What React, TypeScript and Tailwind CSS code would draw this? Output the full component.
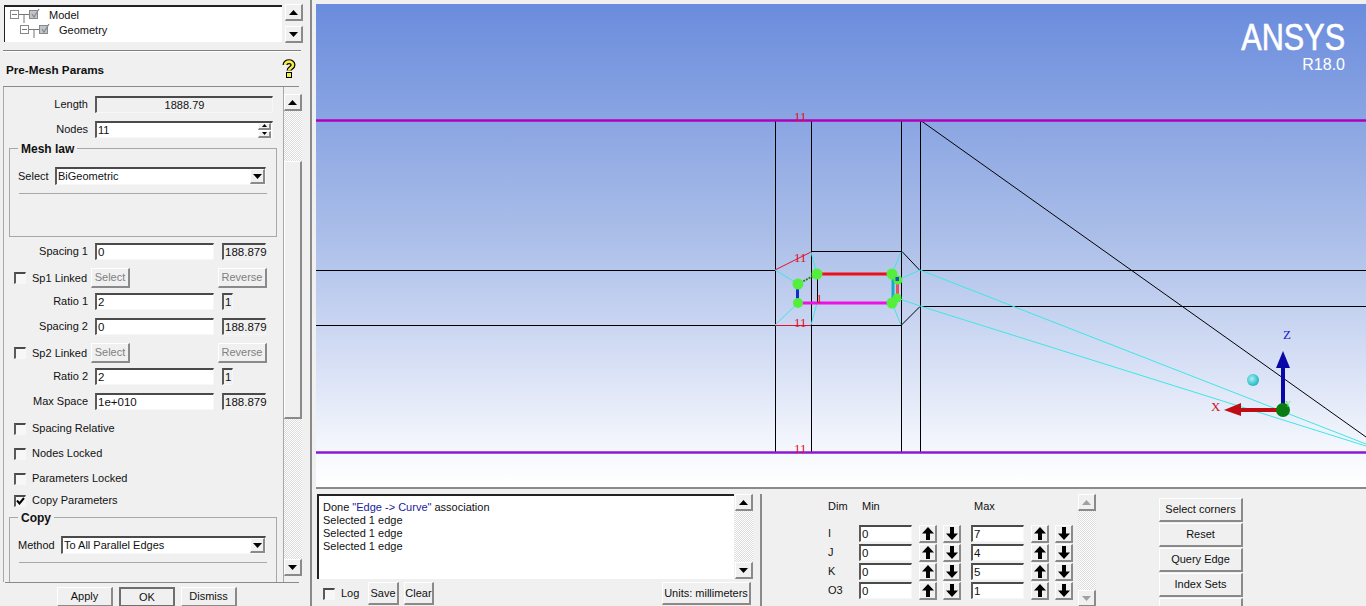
import type { ReactNode } from "react";

const font = { fontFamily: '"Liberation Sans", Arial, sans-serif' };

const raised = "border-t border-l border-t-white border-l-white border-r-2 border-b-2 border-r-[#8a8a8a] border-b-[#8a8a8a] bg-[#f0f0f0]";
const sunken = "border-t-2 border-l-2 border-t-[#4a4a4a] border-l-[#5a5a5a] border-r border-b border-r-[#f7f7f7] border-b-[#f7f7f7]";
const track = "bg-[repeating-conic-gradient(#ffffff_0_25%,#dcdcdc_0_50%)] bg-[length:2px_2px]";

function Arrow({ up, muted }: { up?: boolean; muted?: boolean }) {
  return (
    <svg width="9" height="5" viewBox="0 0 9 5">
      <path d={up ? "M4.5 0 L9 5 L0 5 Z" : "M0 0 L9 0 L4.5 5 Z"} fill={muted ? "#a0a0a0" : "#000"} />
    </svg>
  );
}

function ScrollBtn({ up, muted, h = "h-[17px]" }: { up?: boolean; muted?: boolean; h?: string }) {
  return (
    <div className={`${raised} ${h} w-[18px] shrink-0 flex items-center justify-center`}>
      <Arrow up={up} muted={muted} />
    </div>
  );
}

function Field({ value, w, blank }: { value: string; w: string; blank?: boolean }) {
  return (
    <div className={`${sunken} ${w} h-[17px] shrink-0 pl-px text-[11.5px] leading-[14px] ${blank ? "bg-white" : "bg-[#f0f0f0]"}`}>
      {value}
    </div>
  );
}

function LabelRow({ label, mt, children }: { label: string; mt: string; children: ReactNode }) {
  return (
    <div className={`${mt} flex h-[17px] items-center`}>
      <div className="w-[84px] shrink-0 text-right">{label}</div>
      <div className="ml-[7px] flex">{children}</div>
    </div>
  );
}

function SpacingRow({ label, mt, value, calc }: { label: string; mt: string; value: string; calc: string }) {
  return (
    <LabelRow label={label} mt={mt}>
      <Field value={value} w="w-[119px]" blank />
      <div className="ml-[8px]">
        <Field value={calc} w={calc === "1" ? "w-[11px]" : "w-[44px]"} />
      </div>
    </LabelRow>
  );
}

function Check({ checked }: { checked?: boolean }) {
  return (
    <div className={`${sunken} h-[12px] w-[12px] shrink-0 bg-[#f7f7f7] flex items-center justify-center`}>
      {checked && (
        <svg width="9" height="8" viewBox="0 0 9 8">
          <path d="M1 3.5 L3.5 6.5 L8 1" fill="none" stroke="#000" strokeWidth="2" />
        </svg>
      )}
    </div>
  );
}

function CheckRow({ label, mt, checked }: { label: string; mt: string; checked?: boolean }) {
  return (
    <div className={`${mt} ml-[10px] flex h-[13px] items-center gap-[6px]`}>
      <Check checked={checked} />
      <span>{label}</span>
    </div>
  );
}

function LinkedRow({ label, mt }: { label: string; mt: string }) {
  return (
    <div className={`${mt} flex h-[20px] items-center`}>
      <div className="ml-[10px]">
        <Check />
      </div>
      <span className="ml-[6px] w-[59px] shrink-0">{label}</span>
      <div className={`${raised} flex h-[20px] w-[39px] items-center justify-center text-[#808080]`}>Select</div>
      <div className={`${raised} ml-[88px] flex h-[20px] w-[49px] items-center justify-center text-[#808080]`}>Reverse</div>
    </div>
  );
}

function DropDown({ value, w }: { value: string; w: string }) {
  return (
    <div className={`${sunken} ${w} flex h-[18px] items-center justify-between bg-white pl-px`}>
      <span>{value}</span>
      <div className={`${raised} flex h-[15px] w-[15px] items-center justify-center`}>
        <Arrow />
      </div>
    </div>
  );
}

function GroupBox({ title, mt, h, children }: { title: string; mt: string; h: string; children: ReactNode }) {
  return (
    <div className={`${mt} ${h} relative ml-[5px] w-[268px] border border-[#a8a8a8] pt-[18px]`}>
      <div className="absolute -top-[9px] left-[8px] bg-[#f0f0f0] px-[3px] text-[12px] font-bold">{title}</div>
      {children}
    </div>
  );
}

function HelpIcon() {
  return (
    <svg width="14" height="19" viewBox="0 0 14 19" className="-mt-[3px]">
      <path d="M3 6 C3 1.5 11 1.5 11 6 C11 9 7 9 7 11.5" fill="none" stroke="#000" strokeWidth="5" />
      <path d="M3 6 C3 1.5 11 1.5 11 6 C11 9 7 9 7 11.5" fill="none" stroke="#f6ee3c" strokeWidth="2.6" />
      <rect x="4.5" y="13.5" width="5" height="5" fill="#f6ee3c" stroke="#000" />
    </svg>
  );
}

function TreeNode({ label, indent }: { label: string; indent: string }) {
  return (
    <div className={`${indent} flex h-[15px] items-center`}>
      <svg width="30" height="15" viewBox="0 0 30 15" className="shrink-0">
        <rect x="0.5" y="2.5" width="8" height="8" fill="#fff" stroke="#888" />
        <path d="M2 6.5 H7" stroke="#777" />
        <path d="M9 6.5 H19 M14 6.5 V15" stroke="#777" fill="none" />
        <rect x="19.5" y="2.5" width="8" height="8" fill="#bfc5cc" stroke="#888" />
        <path d="M22 6 L24 9 L29 1" fill="none" stroke="#8b8b8b" strokeWidth="1.3" />
      </svg>
      <span className="ml-[9px]">{label}</span>
    </div>
  );
}

function LeftPanel() {
  return (
    <div className="flex w-[312px] shrink-0 flex-col border-r-2 border-r-[#8a8a8a] pt-[4px]">
      <div className="flex h-[39px] shrink-0">
        <div className="ml-[4px] mt-px h-[37px] w-[278px] overflow-hidden border-t-2 border-l border-t-[#222] border-l-[#222] bg-white pl-[5px]">
          <TreeNode label="Model" indent="mt-px" />
          <TreeNode label="Geometry" indent="ml-[10px]" />
        </div>
        <div className="ml-[3px] flex w-[18px] flex-col justify-between">
          <ScrollBtn up />
          <ScrollBtn />
        </div>
      </div>
      <div className="ml-[3px] mt-[7px] h-[2px] w-[298px] shrink-0 border-t border-t-[#808080] border-b border-b-white" />
      <div className="flex h-[34px] shrink-0 items-center justify-between pl-[6px] pr-[14px] pt-[2px]">
        <span className="text-[11.7px] font-bold">Pre-Mesh Params</span>
        <HelpIcon />
      </div>
      <div className="ml-[3px] h-px w-[296px] shrink-0 bg-[#8a8a8a]" />
      <div className="flex h-[495px] shrink-0">
        <div className="ml-[3px] h-full w-[281px] overflow-hidden border-x border-x-[#a8a8a8]">
          <LabelRow label="Length" mt="mt-[9px]">
            <div className={`${sunken} flex h-[17px] w-[178px] items-center justify-center bg-[#f0f0f0]`}>1888.79</div>
          </LabelRow>
          <LabelRow label="Nodes" mt="mt-[8px]">
            <div className={`${sunken} flex h-[17px] w-[178px] items-center justify-between bg-white pl-px`}>
              <span>11</span>
              <div className="mr-px flex flex-col gap-px">
                <div className={`${raised} flex h-[7px] w-[13px] items-center justify-center`}>
                  <svg width="5" height="3" viewBox="0 0 5 3"><path d="M2.5 0 L5 3 L0 3 Z" /></svg>
                </div>
                <div className={`${raised} flex h-[7px] w-[13px] items-center justify-center`}>
                  <svg width="5" height="3" viewBox="0 0 5 3"><path d="M0 0 L5 0 L2.5 3 Z" /></svg>
                </div>
              </div>
            </div>
          </LabelRow>
          <GroupBox title="Mesh law" mt="mt-[10px]" h="h-[89px]">
            <div className="ml-[8px] flex items-center gap-[6px]">
              <span className="w-[31px]">Select</span>
              <DropDown value="BiGeometric" w="w-[211px]" />
            </div>
            <div className="ml-[9px] mt-[8px] h-px w-[248px] bg-[#a8a8a8]" />
          </GroupBox>
          <SpacingRow label="Spacing 1" mt="mt-[6px]" value="0" calc="188.879" />
          <LinkedRow label="Sp1 Linked" mt="mt-[8px]" />
          <SpacingRow label="Ratio 1" mt="mt-[5px]" value="2" calc="1" />
          <SpacingRow label="Spacing 2" mt="mt-[8px]" value="0" calc="188.879" />
          <LinkedRow label="Sp2 Linked" mt="mt-[8px]" />
          <SpacingRow label="Ratio 2" mt="mt-[5px]" value="2" calc="1" />
          <SpacingRow label="Max Space" mt="mt-[8px]" value="1e+010" calc="188.879" />
          <CheckRow label="Spacing Relative" mt="mt-[12px]" />
          <CheckRow label="Nodes Locked" mt="mt-[12px]" />
          <CheckRow label="Parameters Locked" mt="mt-[12px]" />
          <CheckRow label="Copy Parameters" mt="mt-[9px]" checked />
          <GroupBox title="Copy" mt="mt-[10px]" h="h-[70px]">
            <div className="ml-[8px] flex items-center gap-[6px]">
              <span className="w-[37px]">Method</span>
              <DropDown value="To All Parallel Edges" w="w-[205px]" />
            </div>
            <div className="ml-[9px] mt-[8px] h-px w-[248px] bg-[#a8a8a8]" />
          </GroupBox>
        </div>
        <div className="flex w-[19px] flex-col pt-[7px] pb-[6px]">
          <ScrollBtn up />
          <div className={`h-[50px] w-[18px] ${track}`} />
          <div className={`${raised} h-[258px] w-[18px]`} />
          <div className={`flex-1 w-[18px] ${track}`} />
          <ScrollBtn />
        </div>
      </div>
      <div className="ml-[5px] h-px w-[294px] shrink-0 bg-[#8a8a8a]" />
      <div className="ml-[57px] mt-[4px] flex shrink-0 gap-[6px]">
        <div className={`${raised} flex h-[20px] w-[56px] items-center justify-center`}>Apply</div>
        <div className="flex h-[20px] w-[56px] items-center justify-center border-2 border-[#6e6e6e]">OK</div>
        <div className={`${raised} flex h-[20px] w-[56px] items-center justify-center`}>Dismiss</div>
      </div>
    </div>
  );
}

function Viewport() {
  return (
    <div className="relative h-[483px] w-full shrink-0 overflow-hidden bg-[linear-gradient(to_bottom,#6a8cdd_0%,#a9bde8_47%,#d6dff5_74%,#f6f8fd_93%,#ffffff_100%)]">
      <svg className="absolute inset-0" width="1050" height="483" viewBox="316 4 1050 483">
        <defs>
          <radialGradient id="sphere" cx="40%" cy="40%" r="60%">
            <stop offset="0%" stopColor="#a8f0f0" />
            <stop offset="100%" stopColor="#20b8c4" />
          </radialGradient>
        </defs>
        <g stroke="#000" strokeWidth="1" fill="none">
          <path d="M775.5 120 V452 M811.5 120 V452 M901.5 120 V452 M920.5 120 V452" />
          <path d="M316 270.5 H775 M316 325.5 H775 M775 325.5 H901 L920 306.5 H1366" />
          <path d="M811 251.5 H902 L920 270.5 H1366" />
          <path d="M920 120 L1366 437" />
          <path d="M817.5 274 V303" />
        </g>
        <g stroke="#e01030" strokeWidth="1" fill="none">
          <path d="M775 270 L811 252 M775 325.5 H811" />
        </g>
        <g stroke="#3fe6e6" strokeWidth="1" fill="none">
          <path d="M920 270 L1366 444 M920 306 L1366 446" />
          <path d="M798 284 L775 270 M798 303 L775 325 M817 274 L811 252 M817 303 L811 325" />
          <path d="M892 274 L901 252 M892 303 L901 325 M898 280 L920 270 M897 298 L920 306" />
        </g>
        <path d="M316 120.5 H1366" stroke="#b000b8" strokeWidth="2.5" />
        <path d="M316 452.5 H1366" stroke="#8a18d4" strokeWidth="2.5" />
        <path d="M817 274 H892" stroke="#ee1018" strokeWidth="3" />
        <path d="M798 303 H892" stroke="#f010e0" strokeWidth="3" />
        <path d="M797.5 284 V303" stroke="#1030c8" strokeWidth="3" />
        <path d="M798 284 L817 274" stroke="#228822" strokeWidth="2" strokeDasharray="2 1" />
        <path d="M893 276 V302" stroke="#10b0c0" strokeWidth="3" />
        <path d="M897.5 282 V298" stroke="#e85060" strokeWidth="3" />
        <g fill="#54ee3c">
          <circle cx="817" cy="274" r="5.5" />
          <circle cx="798" cy="284" r="5.5" />
          <circle cx="798" cy="303" r="5" />
          <circle cx="892" cy="274" r="5.5" />
          <circle cx="898" cy="280" r="4.5" />
          <circle cx="897" cy="298" r="4.5" />
          <circle cx="892" cy="303" r="5.5" />
        </g>
        <path d="M895.5 277 H899 V281 H895.5 Z" fill="#2050c0" />
        <g fill="#e01020" fontFamily='"Liberation Serif", serif' fontSize="13">
          <text x="794" y="121">11</text>
          <text x="794" y="262">11</text>
          <text x="794" y="327">11</text>
          <text x="794" y="453">11</text>
          <text x="816" y="303">1</text>
        </g>
        <circle cx="1253" cy="380" r="6" fill="url(#sphere)" />
        <path d="M1283 410 V366" stroke="#0808a8" strokeWidth="4" />
        <path d="M1283 351 L1276 368 H1290 Z" fill="#0808a8" />
        <path d="M1283 410 H1240" stroke="#c00c14" strokeWidth="4" />
        <path d="M1224 410 L1241 403 V416 Z" fill="#c00c14" />
        <circle cx="1283" cy="410" r="7" fill="#0a7c14" />
        <text x="1283" y="339" fill="#1818c8" fontFamily='"Liberation Serif", serif' fontSize="13">Z</text>
        <text x="1211" y="411" fill="#d01020" fontFamily='"Liberation Serif", serif' fontSize="13">X</text>
        <text x="1285" y="407" fill="#50e040" fontFamily='"Liberation Serif", serif' fontSize="8">Y</text>
      </svg>
      <div className="absolute right-[21px] top-[16px] flex flex-col items-end text-white">
        <div className="origin-right scale-x-[0.85] text-[36px] leading-[36px] [-webkit-text-stroke:0.6px_white]">ANSYS</div>
        <div className="text-[16px] leading-[18px]">R18.0</div>
      </div>
    </div>
  );
}

function MessagePane() {
  return (
    <div className="flex w-[436px] shrink-0 flex-col">
      <div className="flex h-[85px]">
        <div className="h-full w-[417px] border-t-2 border-l-2 border-t-[#222] border-l-[#222] bg-white pl-[4px] pt-[5px] leading-[13px]">
          <div>
            Done <span className="text-[#1a1a9c]">"Edge -&gt; Curve"</span> association
          </div>
          <div>Selected 1 edge</div>
          <div>Selected 1 edge</div>
          <div>Selected 1 edge</div>
        </div>
        <div className={`ml-[1px] flex w-[18px] flex-col justify-between ${track}`}>
          <ScrollBtn up />
          <ScrollBtn />
        </div>
      </div>
      <div className="mt-[3px] flex items-center">
        <div className="ml-[6px]">
          <Check />
        </div>
        <span className="ml-[6px] w-[27px]">Log</span>
        <div className={`${raised} flex h-[23px] w-[31px] items-center justify-center`}>Save</div>
        <div className={`${raised} ml-[5px] flex h-[23px] w-[30px] items-center justify-center`}>Clear</div>
        <div className={`${raised} ml-[228px] flex h-[23px] w-[89px] items-center justify-center whitespace-nowrap`}>Units: millimeters</div>
      </div>
    </div>
  );
}

function StepBtn({ up }: { up?: boolean }) {
  return (
    <div className={`${raised} flex h-[18px] w-[18px] items-center justify-center`}>
      <svg width="12" height="13" viewBox="0 0 12 13">
        <path d={up ? "M6 0 L12 6.5 H8 V13 H4 V6.5 H0 Z" : "M6 13 L12 6.5 H8 V0 H4 V6.5 H0 Z"} />
      </svg>
    </div>
  );
}

function DimRow({ dim, min, max }: { dim: string; min: string; max: string }) {
  return (
    <div className="flex h-[19px] items-center">
      <span className="w-[31px] shrink-0">{dim}</span>
      <Field value={min} w="w-[53px]" blank />
      <div className="ml-[7px] flex gap-[6px]">
        <StepBtn up />
        <StepBtn />
      </div>
      <div className="ml-[10px]">
        <Field value={max} w="w-[53px]" blank />
      </div>
      <div className="ml-[7px] flex gap-[6px]">
        <StepBtn up />
        <StepBtn />
      </div>
    </div>
  );
}

function SideButton({ label }: { label: string }) {
  return <div className={`${raised} flex h-[24px] w-[84px] shrink-0 items-center justify-center`}>{label}</div>;
}

function BottomPanel() {
  return (
    <div className="flex h-[119px] shrink-0 border-t-2 border-t-[#8a8a8a] pl-px pt-[5px]">
      <MessagePane />
      <div className="ml-[7px] h-full w-[2px] bg-[#8a8a8a]" />
      <div className="ml-[66px] w-[250px] shrink-0">
        <div className="mt-[6px] flex h-[13px] items-center">
          <span className="w-[34px]">Dim</span>
          <span className="w-[112px]">Min</span>
          <span>Max</span>
        </div>
        <div className="mt-[11px]">
          <DimRow dim="I" min="0" max="7" />
          <DimRow dim="J" min="0" max="4" />
          <DimRow dim="K" min="0" max="5" />
          <DimRow dim="O3" min="0" max="1" />
        </div>
      </div>
      <div className={`flex h-[113px] w-[18px] shrink-0 flex-col justify-between ${track}`}>
        <ScrollBtn up muted />
        <ScrollBtn muted />
      </div>
      <div className="ml-[63px] flex flex-col gap-px pt-[4px]">
        <SideButton label="Select corners" />
        <SideButton label="Reset" />
        <SideButton label="Query Edge" />
        <SideButton label="Index Sets" />
        <SideButton label="" />
      </div>
    </div>
  );
}

export default function App() {
  return (
    <div className="flex h-[606px] w-[1366px] overflow-hidden bg-[#f0f0f0] text-[11px] text-[#111]" style={font}>
      <LeftPanel />
      <div className="flex min-w-0 flex-1 flex-col pl-[4px] pt-[4px]">
        <Viewport />
        <BottomPanel />
      </div>
    </div>
  );
}
